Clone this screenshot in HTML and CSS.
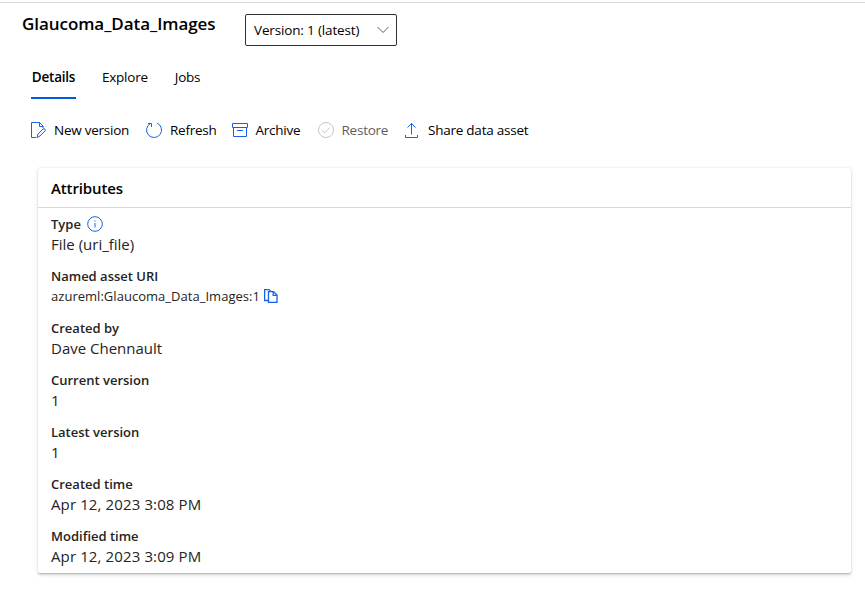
FILE: index.html
```html
<!DOCTYPE html>
<html lang="en">

<head>
    <meta charset="UTF-8">
    <meta name="viewport" content="width=device-width, initial-scale=1.0">
    <title>Glaucoma_Data_Images</title>
    <link rel="stylesheet" href="styles.css">
</head>

<body>
    <header class="header">
        <h1 class="title">Glaucoma_Data_Images</h1>
        <button class="version" type="button">
            <span>Version: 1 (latest)</span>
            <svg class="chevron" width="12" height="8" viewBox="0 0 12 8"><path d="M.5 1l5.500 5.500L11.500 1" /></svg>
        </button>
    </header>

    <nav class="tabs">
        <a class="tab on">Details</a>
        <a class="tab">Explore</a>
        <a class="tab">Jobs</a>
    </nav>

    <div class="toolbar">
        <a class="command new">
            <svg class="icon" viewBox="0 0 16 16"><path d="M6 15.500H1.500V.5h8l3.500 3.500v2M9.500.5v4h4M7 15.500l1-3.500 5-5c1.500-1 3.200.5 2 2l-5 5z" /></svg>
            <span>New version</span>
        </a>
        <a class="command refresh">
            <svg class="icon" viewBox="0 0 16 16"><path d="M11 1.100A7.500 7.500 0 1 1 4.500 1.400M2 1.500h3.500V5" /></svg>
            <span>Refresh</span>
        </a>
        <a class="command archive">
            <svg class="icon" viewBox="0 0 16 16"><path d="M.5 1.500h15v4H.5zM1.500 5.500v9h13v-9M5 8.500h6" /></svg>
            <span>Archive</span>
        </a>
        <a class="command restore disabled">
            <svg class="icon" viewBox="0 0 16 16"><circle cx="8" cy="8" r="7.500" /><path d="M4 8.200l2.700 2.600 5.300-5.300" /></svg>
            <span>Restore</span>
        </a>
        <a class="command share">
            <svg class="icon" viewBox="0 0 16 16"><path d="M7.500 12.500v-11M3.500 5.500l4-4 4 4M1.500 13v2.500h12V13" /></svg>
            <span>Share data asset</span>
        </a>
    </div>

    <section class="card">
        <h2 class="card-title">Attributes</h2>
        <dl class="attributes">
            <div class="row">
                <dt>Type
                    <svg class="icon info" viewBox="0 0 16 16"><circle cx="8" cy="8" r="7.300" /><path d="M8 7v4.500M8 4.500v1.200" /></svg>
                </dt>
                <dd>File (uri_file)</dd>
            </div>
            <div class="row">
                <dt>Named asset URI</dt>
                <dd class="uri"><span>azureml:Glaucoma_Data_Images:1</span>
                    <svg class="copy" width="14" height="14" viewBox="0 0 14 14"><path d="M4 11.500H.6V.6H5L7 2.500M4.500 2.600h5l3.500 3.500v7.300H4.500zM9.200 2.600v3.700H13" /></svg>
                </dd>
            </div>
            <div class="row">
                <dt>Created by</dt>
                <dd>Dave Chennault</dd>
            </div>
            <div class="row">
                <dt>Current version</dt>
                <dd>1</dd>
            </div>
            <div class="row">
                <dt>Latest version</dt>
                <dd>1</dd>
            </div>
            <div class="row">
                <dt>Created time</dt>
                <dd class="time">Apr 12, 2023 3:08 PM</dd>
            </div>
            <div class="row">
                <dt>Modified time</dt>
                <dd class="time">Apr 12, 2023 3:09 PM</dd>
            </div>
        </dl>
    </section>
</body>

</html>
```

FILE: styles.css
```css
* {
    box-sizing: border-box;
}

body {
    min-height: 100vh;
    margin: 0;
    padding-top: 2px;
    background: linear-gradient(#dadada, #dadada) 0 2px / 100% 1px no-repeat #fff;
    color: #000;
    font: 13.5px/20px "Segoe UI", "Open Sans", "Noto Sans", sans-serif;
    letter-spacing: -.24px;
    white-space: nowrap;
}

h1,
h2,
dl,
dd {
    margin: 0;
}

.header {
    display: flex;
    align-items: flex-start;
    height: 62px;
    padding: 12px 0 0 22px;
}

.title {
    width: 223px;
    margin-top: -2px;
    font-size: 17px;
    line-height: 24px;
    font-weight: 600;
    letter-spacing: -.06px;
}

.version {
    display: flex;
    align-items: center;
    justify-content: space-between;
    width: 152px;
    height: 32px;
    padding: 0 7px 0 8px;
    border: 1px solid #323130;
    border-radius: 2px;
    background: #fff;
    color: #000;
    font: inherit;
    letter-spacing: -.15px;
}

.chevron {
    fill: none;
    stroke: #605e5c;
}

.tabs {
    display: flex;
    gap: 27px;
    height: 35px;
    padding-left: 31px;
}

.tab {
    height: 35px;
    padding-top: 3px;
}

.tab.on {
    width: 45px;
    margin-right: -1px;
    border-bottom: 2px solid #015cda;
    font-weight: 600;
    text-align: center;
}

.toolbar {
    display: flex;
    margin-top: 21px;
    padding-left: 30px;
}

.command {
    display: flex;
    align-items: center;
    gap: 8px;
}

.new {
    width: 116px;
}

.refresh {
    width: 85.500px;
}

.archive {
    width: 86px;
}

.restore {
    width: 86.500px;
}

.icon {
    flex: none;
    width: 16px;
    height: 16px;
    fill: none;
    stroke: #1664e3;
}

.disabled {
    color: #605e5c;
}

.disabled .icon {
    stroke: #c8c6c4;
}

.card {
    width: 813px;
    height: 405px;
    margin: 28px 0 0 38px;
    border-radius: 2px;
    box-shadow: 0 1.600px 3.600px rgba(0, 0, 0, .18), 0 .3px .9px rgba(0, 0, 0, .15);
}

.card-title {
    height: 40px;
    padding: 10px 13px 0;
    border-bottom: 1px solid #d6d6d6;
    font-size: 15px;
    font-weight: 600;
    letter-spacing: -.12px;
}

.attributes {
    padding: 6px 13px;
    color: #242424;
    letter-spacing: 0;
}

.row {
    height: 52px;
}

dt {
    display: flex;
    align-items: center;
    gap: 6px;
    height: 20px;
    font-size: 13px;
    font-weight: 600;
}

.info {
    margin-top: -1px;
}

dd {
    height: 20px;
    font-size: 15px;
}

.time {
    letter-spacing: .12px;
}

.uri {
    display: flex;
    align-items: center;
    gap: 4px;
    font-size: 13px;
    letter-spacing: .03px;
}

.copy {
    fill: none;
    stroke: #1664e3;
    stroke-width: 1.300;
}
```
